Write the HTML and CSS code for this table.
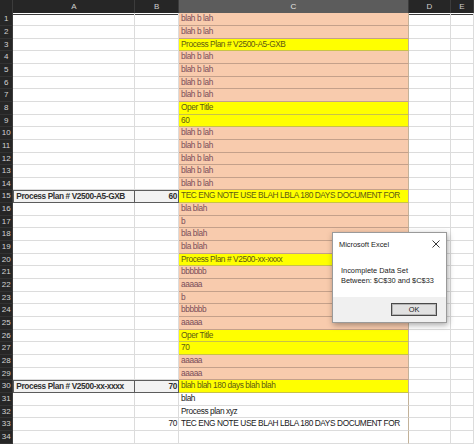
FILE: index.html
```html
<!DOCTYPE html>
<html>
<head>
<meta charset="utf-8">
<link rel="stylesheet" href="styles.css">
</head>
<body>
<div class="sheet">
  <div class="r hdr"><div class="rh corner"></div><div class="ch">A</div><div class="ch">B</div><div class="ch sel">C</div><div class="ch">D</div><div class="ch">E</div></div>
  <div class="r"><div class="rh">1</div><div class="a"></div><div class="b"></div><div class="c pe">blah b lah</div><div class="d"></div><div class="e"></div></div>
  <div class="r"><div class="rh">2</div><div class="a"></div><div class="b"></div><div class="c pe">blah b lah</div><div class="d"></div><div class="e"></div></div>
  <div class="r"><div class="rh">3</div><div class="a"></div><div class="b"></div><div class="c ye">Process Plan # V2500-A5-GXB</div><div class="d"></div><div class="e"></div></div>
  <div class="r"><div class="rh">4</div><div class="a"></div><div class="b"></div><div class="c pe">blah b lah</div><div class="d"></div><div class="e"></div></div>
  <div class="r"><div class="rh">5</div><div class="a"></div><div class="b"></div><div class="c pe">blah b lah</div><div class="d"></div><div class="e"></div></div>
  <div class="r"><div class="rh">6</div><div class="a"></div><div class="b"></div><div class="c pe">blah b lah</div><div class="d"></div><div class="e"></div></div>
  <div class="r"><div class="rh">7</div><div class="a"></div><div class="b"></div><div class="c pe">blah b lah</div><div class="d"></div><div class="e"></div></div>
  <div class="r"><div class="rh">8</div><div class="a"></div><div class="b"></div><div class="c ye">Oper Title</div><div class="d"></div><div class="e"></div></div>
  <div class="r"><div class="rh">9</div><div class="a"></div><div class="b"></div><div class="c ye">60</div><div class="d"></div><div class="e"></div></div>
  <div class="r"><div class="rh">10</div><div class="a"></div><div class="b"></div><div class="c pe">blah b lah</div><div class="d"></div><div class="e"></div></div>
  <div class="r"><div class="rh">11</div><div class="a"></div><div class="b"></div><div class="c pe">blah b lah</div><div class="d"></div><div class="e"></div></div>
  <div class="r"><div class="rh">12</div><div class="a"></div><div class="b"></div><div class="c pe">blah b lah</div><div class="d"></div><div class="e"></div></div>
  <div class="r"><div class="rh">13</div><div class="a"></div><div class="b"></div><div class="c pe">blah b lah</div><div class="d"></div><div class="e"></div></div>
  <div class="r"><div class="rh">14</div><div class="a"></div><div class="b"></div><div class="c pe">blah b lah</div><div class="d"></div><div class="e"></div></div>
  <div class="r"><div class="rh">15</div><div class="a box">Process Plan # V2500-A5-GXB</div><div class="b box num">60</div><div class="c ye">TEC ENG NOTE USE BLAH LBLA 180 DAYS DOCUMENT FOR</div><div class="d"></div><div class="e"></div></div>
  <div class="r"><div class="rh">16</div><div class="a"></div><div class="b"></div><div class="c pe">bla blah</div><div class="d"></div><div class="e"></div></div>
  <div class="r"><div class="rh">17</div><div class="a"></div><div class="b"></div><div class="c pe">b</div><div class="d"></div><div class="e"></div></div>
  <div class="r"><div class="rh">18</div><div class="a"></div><div class="b"></div><div class="c pe">bla blah</div><div class="d"></div><div class="e"></div></div>
  <div class="r"><div class="rh">19</div><div class="a"></div><div class="b"></div><div class="c pe">bla blah</div><div class="d"></div><div class="e"></div></div>
  <div class="r"><div class="rh">20</div><div class="a"></div><div class="b"></div><div class="c ye">Process Plan # V2500-xx-xxxx</div><div class="d"></div><div class="e"></div></div>
  <div class="r"><div class="rh">21</div><div class="a"></div><div class="b"></div><div class="c pe">bbbbbb</div><div class="d"></div><div class="e"></div></div>
  <div class="r"><div class="rh">22</div><div class="a"></div><div class="b"></div><div class="c pe">aaaaa</div><div class="d"></div><div class="e"></div></div>
  <div class="r"><div class="rh">23</div><div class="a"></div><div class="b"></div><div class="c pe">b</div><div class="d"></div><div class="e"></div></div>
  <div class="r"><div class="rh">24</div><div class="a"></div><div class="b"></div><div class="c pe">bbbbbb</div><div class="d"></div><div class="e"></div></div>
  <div class="r"><div class="rh">25</div><div class="a"></div><div class="b"></div><div class="c pe">aaaaa</div><div class="d"></div><div class="e"></div></div>
  <div class="r"><div class="rh">26</div><div class="a"></div><div class="b"></div><div class="c ye">Oper Title</div><div class="d"></div><div class="e"></div></div>
  <div class="r"><div class="rh">27</div><div class="a"></div><div class="b"></div><div class="c ye">70</div><div class="d"></div><div class="e"></div></div>
  <div class="r"><div class="rh">28</div><div class="a"></div><div class="b"></div><div class="c pe">aaaaa</div><div class="d"></div><div class="e"></div></div>
  <div class="r"><div class="rh">29</div><div class="a"></div><div class="b"></div><div class="c pe">aaaaa</div><div class="d"></div><div class="e"></div></div>
  <div class="r"><div class="rh">30</div><div class="a box">Process Plan # V2500-xx-xxxx</div><div class="b box num">70</div><div class="c ye">blah blah 180 days blah blah</div><div class="d"></div><div class="e"></div></div>
  <div class="r"><div class="rh">31</div><div class="a"></div><div class="b"></div><div class="c">blah</div><div class="d"></div><div class="e"></div></div>
  <div class="r"><div class="rh">32</div><div class="a"></div><div class="b"></div><div class="c">Process plan xyz</div><div class="d"></div><div class="e"></div></div>
  <div class="r"><div class="rh">33</div><div class="a"></div><div class="b num">70</div><div class="c">TEC ENG NOTE USE BLAH LBLA 180 DAYS DOCUMENT FOR</div><div class="d"></div><div class="e"></div></div>
  <div class="r"><div class="rh">34</div><div class="a"></div><div class="b"></div><div class="c"></div><div class="d"></div><div class="e"></div></div>

  <div class="dialog">
    <div class="dlg-title"><span>Microsoft Excel</span><svg class="dlg-x" width="8" height="8" viewBox="0 0 8 8"><path d="M0.5 0.5 L7.5 7.5 M7.5 0.5 L0.5 7.5" stroke="#222" stroke-width="0.9" fill="none"/></svg></div>
    <div class="dlg-body">Incomplete Data Set<br>Between: $C$30 and $C$33</div>
    <div class="dlg-foot"><div class="ok">OK</div></div>
  </div>
</div>
</body>
</html>
```
FILE: styles.css
```css
html, body {
  margin: 0;
  padding: 0;
  background: #ffffff;
}
.sheet {
  position: relative;
  width: 474px;
  height: 447px;
  overflow: hidden;
  font-family: "Liberation Sans", Arial, sans-serif;
  font-size: 8.3px;
  letter-spacing: -0.4px;
  color: #1a1a1a;
}
.r {
  display: grid;
  grid-template-columns: 13.3px 122px 43.7px 230px 41.7px 1fr;
  height: 12.66px;
}
.r > div {
  box-sizing: border-box;
  border-right: 1px solid #dcdcdc;
  border-bottom: 1px solid #dcdcdc;
  white-space: nowrap;
  overflow: visible;
  line-height: 11.6px;
  padding-left: 2px;
}
.hdr {
  height: 13.3px;
  background: #262626;
}
.hdr > div {
  border-right: 1px solid #3c3c3c;
  border-bottom: 1px solid #3c3c3c;
  color: #cfcfcf;
  text-align: center;
  line-height: 13px;
  padding-left: 0;
  font-size: 8px;
  letter-spacing: 0;
}
.hdr .sel {
  background: #5c5c5c;
  border-bottom: 2px solid #2e7d4f;
  color: #e6e6e6;
}
.r > .rh {
  background: #262626;
  color: #d2d2d2;
  text-align: center;
  padding-left: 0;
  border-right: 1px solid #3c3c3c;
  border-bottom: 1px solid #333;
  font-size: 8px;
  letter-spacing: 0;
}
.r > .c {
  color: #202020;
  border-right: 1px solid #c3b299;
}
.r > .pe {
  background: #f8cbad;
  color: #7a4e5a;
  border-bottom: 1px solid #c4a08a;
}
.r > .ye {
  background: #ffff00;
  color: #5e5a14;
  border-bottom: 1px solid #c8c248;
}
.r > .box {
  background: #f2f2f2;
  font-weight: bold;
  color: #303030;
  border: 1px solid #5c5c5c;
  line-height: 10px;
}
.r > .b.box {
  border-left: none;
}
.r > .num {
  text-align: right;
  padding-left: 0;
  padding-right: 1px;
}
.dialog {
  position: absolute;
  left: 332px;
  top: 232px;
  width: 115px;
  height: 91px;
  box-sizing: border-box;
  background: #ffffff;
  border: 1px solid #9a9a9a;
  box-shadow: 1px 2px 6px rgba(0, 0, 0, 0.35);
  display: flex;
  flex-direction: column;
  font-family: "Liberation Sans", Arial, sans-serif;
  font-size: 7.4px;
  letter-spacing: 0;
  color: #1a1a1a;
}
.dlg-title {
  display: flex;
  justify-content: space-between;
  align-items: center;
  padding: 6px 6px 0 6px;
  height: 10px;
}
.dlg-x {
  display: block;
}
.dlg-body {
  padding: 17px 0 0 8px;
  line-height: 9.5px;
  flex: 1;
}
.dlg-foot {
  background: #f0f0f0;
  height: 25px;
  display: flex;
  justify-content: flex-end;
  align-items: center;
  padding-right: 9px;
}
.ok {
  width: 46px;
  height: 13px;
  box-sizing: border-box;
  border: 1px solid #4a4a4a;
  box-shadow: inset 0 0 0 1px #b5b5b5;
  background: #e1e1e1;
  text-align: center;
  line-height: 11px;
  font-size: 7.4px;
}
```
